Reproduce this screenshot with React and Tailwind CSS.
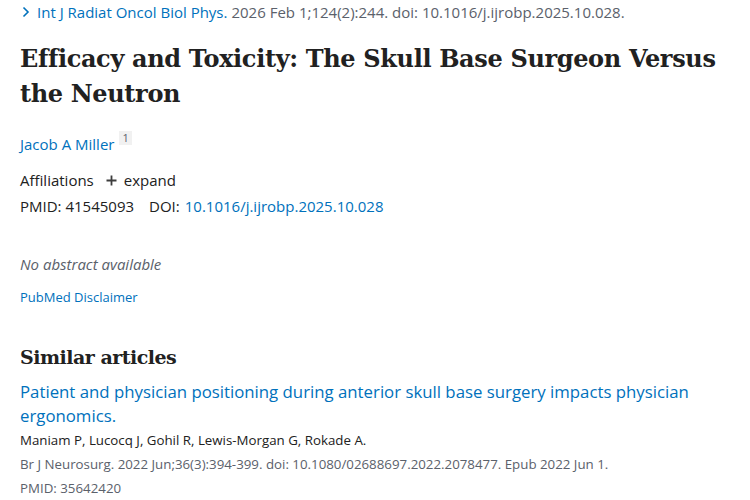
import React from 'react';

const sans = { fontFamily: '"Open Sans", "Noto Sans", sans-serif' };
const serif = { fontFamily: '"DejaVu Serif", "Liberation Serif", serif' };

const Citation = () => (
    <div className="flex items-center h-[24px] text-[15px] text-[#5b616b]">
        <svg width="10" height="12" viewBox="0 0 10 12" className="ml-[21px] mr-[6px]">
            <path d="M2.5 1.5 L7 6 L2.5 10.5" fill="none" stroke="#0071bc" strokeWidth="1.6" />
        </svg>
        <span className="text-[#0071bc]">Int J Radiat Oncol Biol Phys.</span>
        <span className="ml-[4px]">2026 Feb 1;124(2):244. doi: 10.1016/j.ijrobp.2025.10.028.</span>
    </div>
);

const SimilarArticle = () => (
    <div className="mt-[8px]">
        <a className="block text-[16.8px] leading-[24px] text-[#0071bc]">
            Patient and physician positioning during anterior skull base surgery impacts physician ergonomics.
        </a>
        <p className="text-[13.3px] leading-[24px] text-[#212121]">Maniam P, Lucocq J, Gohil R, Lewis-Morgan G, Rokade A.</p>
        <p className="text-[13.3px] leading-[24px] text-[#5b616b]">
            Br J Neurosurg. 2022 Jun;36(3):394-399. doi: 10.1080/02688697.2022.2078477. Epub 2022 Jun 1.
        </p>
        <p className="text-[13.3px] leading-[24px] text-[#5b616b]">PMID: 35642420</p>
    </div>
);

export default function App() {
    return (
        <div className="w-[750px] h-[500px] bg-white overflow-hidden" style={sans}>
            <Citation />

            <div className="px-[20px]">
                {/* Title */}
                <h1 className="mt-[17px] text-[24px] leading-[35px] font-bold tracking-[-0.35px] text-[#212121]" style={serif}>
                    Efficacy and Toxicity: The Skull Base Surgeon Versus the Neutron
                </h1>

                {/* Authors */}
                <div className="mt-[23px] flex items-start text-[15px] leading-[20px]">
                    <a className="text-[#0071bc]">Jacob A Miller</a>
                    <span className="ml-[5px] mt-[-3px] px-[3px] text-[11px] leading-[14px] bg-[#f1f1f1] text-[#5b616b]">1</span>
                </div>

                <div className="mt-[16px] flex items-center text-[15px] leading-[20px] text-[#212121]">
                    <span>Affiliations</span>
                    <svg width="11" height="11" viewBox="0 0 11 11" className="ml-[12px] mr-[7px]">
                        <path d="M5.5 0.5 V10.5 M0.5 5.5 H10.5" stroke="#3d3d3d" strokeWidth="1.8" />
                    </svg>
                    <span>expand</span>
                </div>

                <div className="mt-[6px] flex text-[15px] leading-[20px] text-[#212121]">
                    <span>PMID: 41545093</span>
                    <span className="ml-[15px]">DOI:</span>
                    <a className="ml-[5px] text-[#0071bc]">10.1016/j.ijrobp.2025.10.028</a>
                </div>

                <p className="mt-[38px] text-[15px] leading-[20px] italic text-[#5b616b]">No abstract available</p>

                <a className="block mt-[13px] text-[13px] leading-[20px] text-[#0071bc]">PubMed Disclaimer</a>

                {/* Similar articles */}
                <h2 className="mt-[35px] text-[19px] leading-[30px] font-bold tracking-[-0.5px] text-[#212121]" style={serif}>
                    Similar articles
                </h2>

                <SimilarArticle />
            </div>
        </div>
    );
}
